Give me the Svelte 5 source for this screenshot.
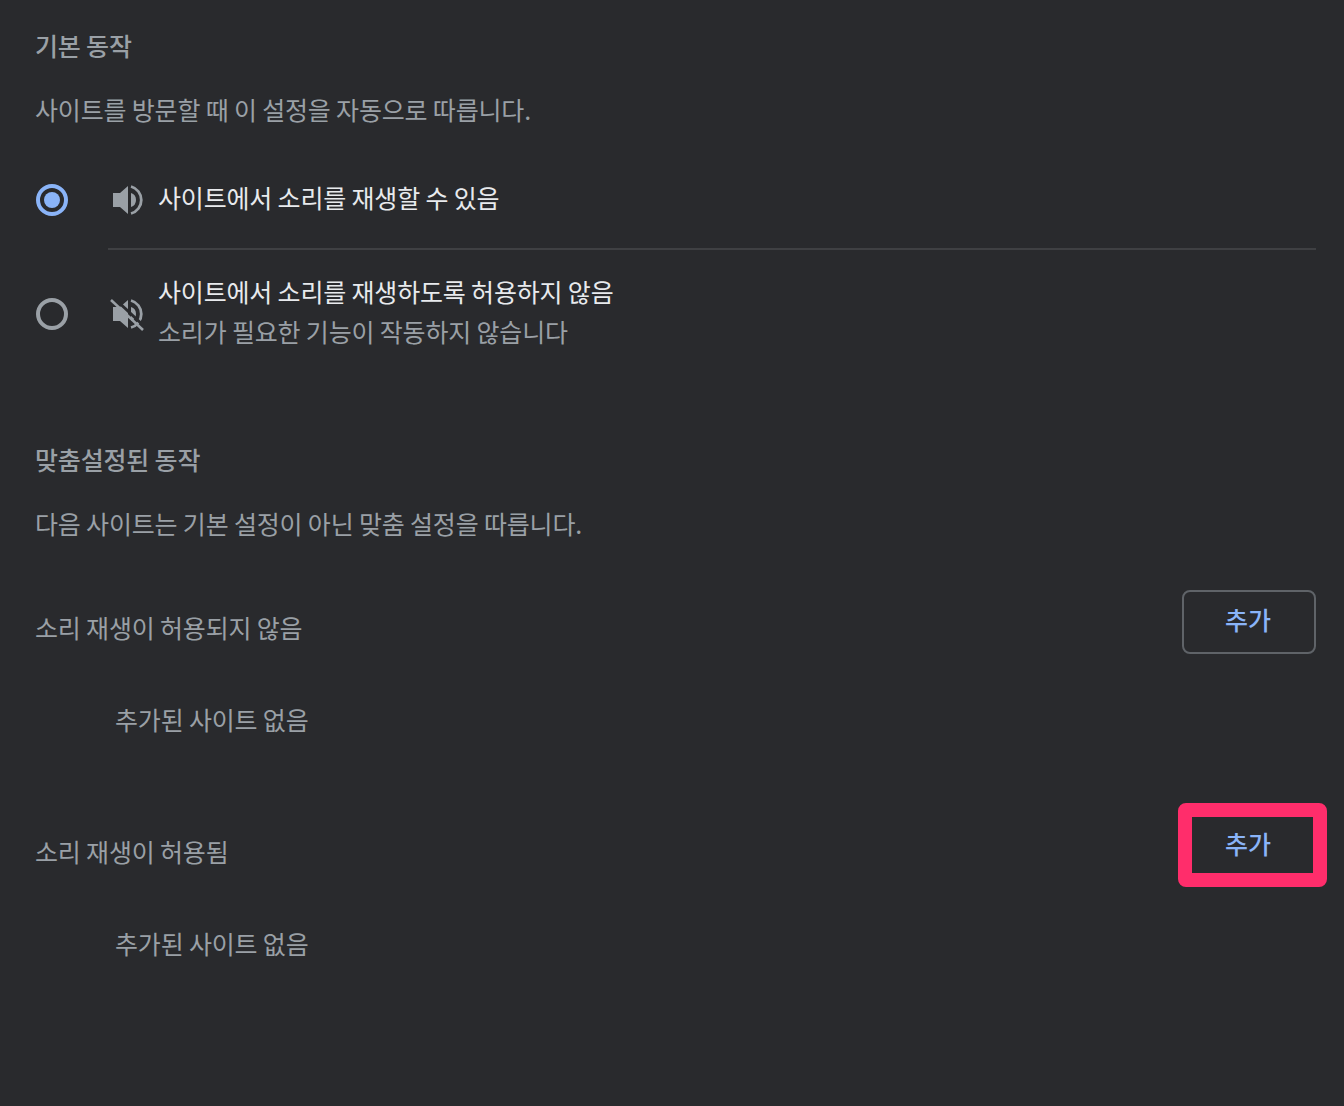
<script>
	const customGroups = [
		{ label: '소리 재생이 허용되지 않음', highlighted: false },
		{ label: '소리 재생이 허용됨', highlighted: true }
	];
</script>

<main class="page">
	<section class="defaults">
		<h2 class="title">기본 동작</h2>
		<p class="desc">사이트를 방문할 때 이 설정을 자동으로 따릅니다.</p>

		<div class="option first">
			<span class="radio checked"></span>
			<svg class="icon" viewBox="0 0 32 32" aria-hidden="true">
				<path class="solid" d="M1 9h7l8-7v28l-8-7H1z" />
				<path class="solid" d="M19 9a7.400 7.400 0 0 1 0 14z" />
				<path class="line" d="M19 2.500a14 14 0 0 1 0 27" />
			</svg>
			<div class="option-text">
				<div class="option-label">사이트에서 소리를 재생할 수 있음</div>
			</div>
		</div>

		<div class="option second">
			<span class="radio"></span>
			<svg class="icon" viewBox="0 0 32 32" aria-hidden="true">
				<path class="solid" d="M1 9h7l8-7v28l-8-7H1z" />
				<path class="solid" d="M19 9a7.400 7.400 0 0 1 0 14z" />
				<path class="line" d="M19 2.500a14 14 0 0 1 0 27" />
				<path class="cut" d="M2 0 33 29" />
				<path class="slash" d="M-1 2 31 32" />
			</svg>
			<div class="option-text">
				<div class="option-label">사이트에서 소리를 재생하도록 허용하지 않음</div>
				<div class="option-sub">소리가 필요한 기능이 작동하지 않습니다</div>
			</div>
		</div>
	</section>

	<section class="custom">
		<h2 class="title">맞춤설정된 동작</h2>
		<p class="desc">다음 사이트는 기본 설정이 아닌 맞춤 설정을 따릅니다.</p>

		{#each customGroups as group}
			<div class="group">
				<div class="group-head">
					<span class="group-label">{group.label}</span>
					<button class="add" class:highlighted={group.highlighted}>
						추가
						{#if group.highlighted}
							<span class="marker"></span>
						{/if}
					</button>
				</div>
				<div class="empty">추가된 사이트 없음</div>
			</div>
		{/each}
	</section>
</main>

<style>
	:global(body) {
		margin: 0;
		background: #292a2d;
	}

	.page {
		box-sizing: border-box;
		height: 1106px;
		overflow: hidden;
		padding: 21px 28px 0 35px;
		background: #292a2d;
		color: #9aa0a6;
		font-family: "Noto Sans CJK KR", "Liberation Sans", sans-serif;
		font-size: 25px;
		letter-spacing: -0.17px;
	}

	.title {
		margin: 0;
		font-size: 25px;
		font-weight: 500;
		line-height: 48px;
	}

	.desc {
		margin: 16px 0 0;
		font-size: 25px;
		font-weight: 400;
		line-height: 48px;
	}

	.option {
		display: flex;
		align-items: center;
	}

	.option.first {
		height: 98px;
		margin-top: 17px;
	}

	.option.second {
		height: 130px;
	}

	.radio {
		box-sizing: border-box;
		position: relative;
		flex: none;
		width: 32px;
		height: 32px;
		margin: 2px 0 0 1px;
		border: 4px solid #9aa0a6;
		border-radius: 50%;
	}

	.radio.checked {
		border-color: #8ab4f8;
	}

	.radio.checked::after {
		content: '';
		position: absolute;
		inset: 4px;
		border-radius: 50%;
		background: #8ab4f8;
	}

	.icon {
		flex: none;
		width: 32px;
		height: 32px;
		margin: 2px 0 0 44px;
		overflow: visible;
	}

	.solid {
		fill: #9aa0a6;
	}

	.line {
		fill: none;
		stroke: #9aa0a6;
		stroke-width: 2.800;
	}

	.slash {
		fill: none;
		stroke: #9aa0a6;
		stroke-width: 2.500;
	}

	.cut {
		fill: none;
		stroke: #292a2d;
		stroke-width: 3;
	}

	.option-text {
		flex: 1;
		align-self: stretch;
		display: flex;
		flex-direction: column;
		justify-content: center;
		margin: -4px 0 0 14px;
	}

	.option-label {
		color: #e8eaed;
		line-height: 40px;
	}

	.option-sub {
		line-height: 40px;
	}

	.second {
		position: relative;
	}

	.second::before {
		content: '';
		position: absolute;
		top: 0;
		left: 73px;
		right: 0;
		height: 2px;
		background: #3f4043;
	}

	.custom {
		margin-top: 57px;
	}

	.group-head {
		display: flex;
		align-items: center;
		justify-content: space-between;
		height: 64px;
		margin-top: 43px;
	}

	.group + .group .group-head {
		margin-top: 71px;
	}

	.group-label {
		line-height: 48px;
		padding-top: 10px;
	}

	.add {
		box-sizing: border-box;
		position: relative;
		flex: none;
		width: 134px;
		height: 64px;
		padding: 0 2px 6px 0;
		border: 2px solid #5f6368;
		border-radius: 8px;
		background: transparent;
		color: #8ab4f8;
		font: 500 25px "Noto Sans CJK KR", "Liberation Sans", sans-serif;
	}

	.add.highlighted {
		border-color: transparent;
	}

	.marker {
		box-sizing: border-box;
		position: absolute;
		left: -6px;
		top: -13px;
		width: 149px;
		height: 84px;
		border: 14px solid #ff2d6b;
		border-radius: 8px;
	}

	.empty {
		margin-top: 41px;
		padding-left: 80px;
		line-height: 48px;
	}
</style>
